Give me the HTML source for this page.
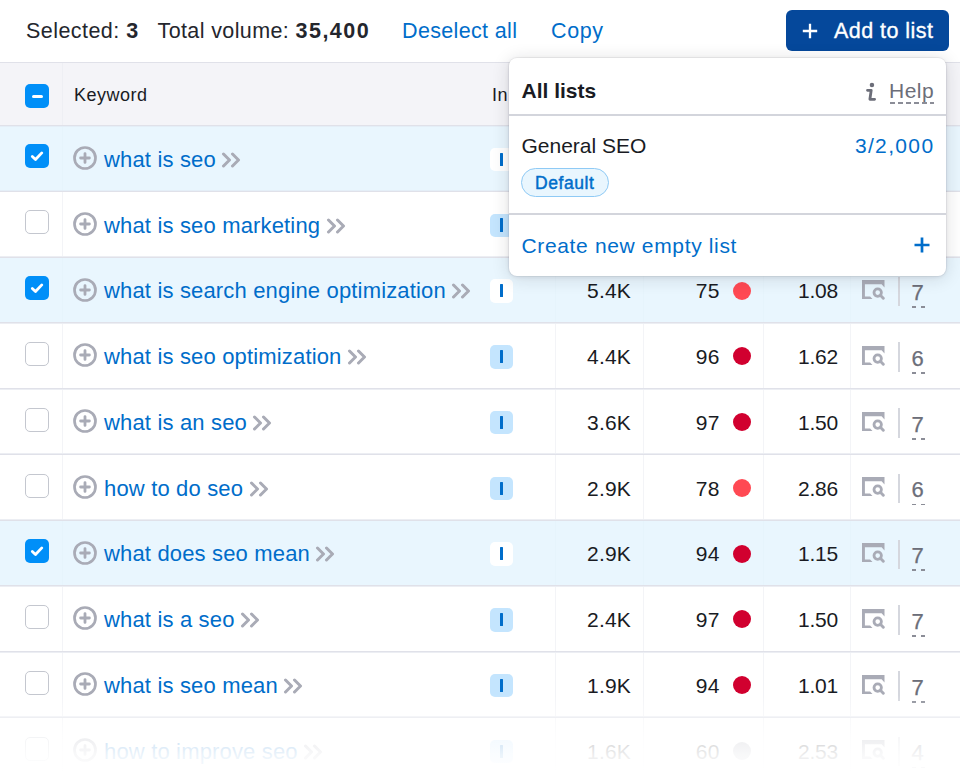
<!DOCTYPE html>
<html><head><meta charset="utf-8"><style>
html,body{margin:0;padding:0;}
body{width:960px;height:771px;overflow:hidden;position:relative;background:#fff;font-family:"Liberation Sans", sans-serif;}
.t{position:absolute;white-space:nowrap;font-family:"Liberation Sans", sans-serif;}
</style></head><body>
<div style="position:absolute;left:0px;top:0px;width:960px;height:62px;background:#fff"></div><div class="t" style="left:26px;top:20.90px;font-size:21.5px;line-height:21.5px;color:#24262d;font-weight:400;letter-spacing:0.45px;">Selected: <b style="font-weight:700">3</b></div><div class="t" style="left:157.5px;top:20.90px;font-size:21.5px;line-height:21.5px;color:#24262d;font-weight:400;letter-spacing:0.38px;">Total volume: <b style="font-weight:700;letter-spacing:1.5px">35,400</b></div><div class="t" style="left:402px;top:20.90px;font-size:21.5px;line-height:21.5px;color:#006dca;font-weight:400;letter-spacing:0.35px;">Deselect all</div><div class="t" style="left:551px;top:20.90px;font-size:21.5px;line-height:21.5px;color:#006dca;font-weight:400;letter-spacing:0.6px;">Copy</div><div style="position:absolute;left:786px;top:9.5px;width:163px;height:41.5px;background:#05489b;border-radius:6px"></div><svg style="position:absolute;left:801px;top:22px;" width="18" height="18" viewBox="0 0 18 18"><path d="M9 1.8V16.2M1.8 9H16.2" stroke="#fff" stroke-width="2.3" stroke-linecap="butt"/></svg><div class="t" style="left:834px;top:20.80px;font-size:21.5px;line-height:21.5px;color:#fff;font-weight:400;letter-spacing:0.45px;-webkit-text-stroke:0.35px #fff">Add to list</div><div style="position:absolute;left:0px;top:61.5px;width:960px;height:1.5px;background:#e0e1e9"></div><div style="position:absolute;left:0px;top:63px;width:960px;height:62.5px;background:#f4f4f8"></div><div style="position:absolute;left:61.5px;top:63px;width:1px;height:62.5px;background:#eeeff4"></div><div style="position:absolute;left:25px;top:84px;width:24px;height:24px;background:#008ff8;border-radius:5px"></div><div style="position:absolute;left:31.5px;top:94.6px;width:11px;height:3px;background:#fff;border-radius:1.5px"></div><div class="t" style="left:74px;top:86.26px;font-size:18px;line-height:18px;color:#191b23;font-weight:400;letter-spacing:0.5px;">Keyword</div><div class="t" style="left:492px;top:86.26px;font-size:18px;line-height:18px;color:#191b23;font-weight:400;letter-spacing:0.6px;">In</div><div style="position:absolute;left:0px;top:126px;width:960px;height:65px;background:#e9f6fe"></div><div style="position:absolute;left:0px;top:125px;width:960px;height:1px;background:#e0e1e9"></div><div style="position:absolute;left:0px;top:126px;width:960px;height:1px;background:#e4eef7"></div><div style="position:absolute;left:61.5px;top:126.5px;width:1px;height:63.760000000000005px;background:#e6f4fc"></div><div style="position:absolute;left:555px;top:126.5px;width:1px;height:63.760000000000005px;background:#e6f4fc"></div><div style="position:absolute;left:642.5px;top:126.5px;width:1px;height:63.760000000000005px;background:#e6f4fc"></div><div style="position:absolute;left:762.5px;top:126.5px;width:1px;height:63.760000000000005px;background:#e6f4fc"></div><div style="position:absolute;left:849.5px;top:126.5px;width:1px;height:63.760000000000005px;background:#e6f4fc"></div><div style="position:absolute;left:25px;top:144.2px;width:24px;height:24px;background:#008ff8;border-radius:5px"></div><svg style="position:absolute;left:25px;top:144.2px;" width="24" height="24" viewBox="0 0 24 24"><path d="M7.3 12.4L10.5 15.5L16.8 8.9" fill="none" stroke="#fff" stroke-width="2.8" stroke-linecap="round" stroke-linejoin="round"/></svg><svg style="position:absolute;left:73px;top:146.1px;" width="24" height="24" viewBox="0 0 24 24"><circle cx="12" cy="12" r="10.5" fill="none" stroke="#a9abb6" stroke-width="2.7"/><path d="M12 7.6V16.4M7.6 12H16.4" stroke="#a9abb6" stroke-width="2.8" stroke-linecap="round"/></svg><div class="t" style="left:104px;top:148.78px;font-size:22px;line-height:22px;color:#006dca;font-weight:400;letter-spacing:0.165px;">what is seo<svg width="20" height="17" viewBox="0 0 20 17" style="vertical-align:-2px;margin-left:5.4px"><path d="M2.5 2L8.5 8L2.5 14M11.5 2L17.5 8L11.5 14" fill="none" stroke="#a9abb6" stroke-width="3" stroke-linecap="round" stroke-linejoin="round"/></svg></div><div style="position:absolute;left:489.7px;top:147.8px;width:23.6px;height:23.6px;background:#fff;border-radius:5px"></div><div style="position:absolute;left:499.8px;top:152.7px;width:2.8px;height:13.2px;background:#006dca;border-radius:0.5px"></div><div style="position:absolute;left:0px;top:192px;width:960px;height:65px;background:#fff"></div><div style="position:absolute;left:0px;top:191px;width:960px;height:1px;background:#e0e1e9"></div><div style="position:absolute;left:0px;top:190px;width:960px;height:1px;background:#e4eef7"></div><div style="position:absolute;left:61.5px;top:192.26px;width:1px;height:63.760000000000005px;background:#f3f4f7"></div><div style="position:absolute;left:555px;top:192.26px;width:1px;height:63.760000000000005px;background:#f3f4f7"></div><div style="position:absolute;left:642.5px;top:192.26px;width:1px;height:63.760000000000005px;background:#f3f4f7"></div><div style="position:absolute;left:762.5px;top:192.26px;width:1px;height:63.760000000000005px;background:#f3f4f7"></div><div style="position:absolute;left:849.5px;top:192.26px;width:1px;height:63.760000000000005px;background:#f3f4f7"></div><div style="position:absolute;left:25.2px;top:210.45999999999998px;width:24px;height:24px;background:#fff;border:1.5px solid #c4c7cf;border-radius:5px;box-sizing:border-box"></div><svg style="position:absolute;left:73px;top:211.85999999999999px;" width="24" height="24" viewBox="0 0 24 24"><circle cx="12" cy="12" r="10.5" fill="none" stroke="#a9abb6" stroke-width="2.7"/><path d="M12 7.6V16.4M7.6 12H16.4" stroke="#a9abb6" stroke-width="2.8" stroke-linecap="round"/></svg><div class="t" style="left:104px;top:214.54px;font-size:22px;line-height:22px;color:#006dca;font-weight:400;letter-spacing:0.165px;">what is seo marketing<svg width="20" height="17" viewBox="0 0 20 17" style="vertical-align:-2px;margin-left:5.4px"><path d="M2.5 2L8.5 8L2.5 14M11.5 2L17.5 8L11.5 14" fill="none" stroke="#a9abb6" stroke-width="3" stroke-linecap="round" stroke-linejoin="round"/></svg></div><div style="position:absolute;left:489.7px;top:213.56px;width:23.6px;height:23.6px;background:#c4e5fe;border-radius:5px"></div><div style="position:absolute;left:499.8px;top:218.45999999999998px;width:2.8px;height:13.2px;background:#006dca;border-radius:0.5px"></div><div style="position:absolute;left:0px;top:258px;width:960px;height:64px;background:#e9f6fe"></div><div style="position:absolute;left:0px;top:257px;width:960px;height:1px;background:#e0e1e9"></div><div style="position:absolute;left:0px;top:256px;width:960px;height:1px;background:#eceef3"></div><div style="position:absolute;left:61.5px;top:258.02px;width:1px;height:63.760000000000005px;background:#e6f4fc"></div><div style="position:absolute;left:555px;top:258.02px;width:1px;height:63.760000000000005px;background:#e6f4fc"></div><div style="position:absolute;left:642.5px;top:258.02px;width:1px;height:63.760000000000005px;background:#e6f4fc"></div><div style="position:absolute;left:762.5px;top:258.02px;width:1px;height:63.760000000000005px;background:#e6f4fc"></div><div style="position:absolute;left:849.5px;top:258.02px;width:1px;height:63.760000000000005px;background:#e6f4fc"></div><div style="position:absolute;left:25px;top:275.71999999999997px;width:24px;height:24px;background:#008ff8;border-radius:5px"></div><svg style="position:absolute;left:25px;top:275.71999999999997px;" width="24" height="24" viewBox="0 0 24 24"><path d="M7.3 12.4L10.5 15.5L16.8 8.9" fill="none" stroke="#fff" stroke-width="2.8" stroke-linecap="round" stroke-linejoin="round"/></svg><svg style="position:absolute;left:73px;top:277.62px;" width="24" height="24" viewBox="0 0 24 24"><circle cx="12" cy="12" r="10.5" fill="none" stroke="#a9abb6" stroke-width="2.7"/><path d="M12 7.6V16.4M7.6 12H16.4" stroke="#a9abb6" stroke-width="2.8" stroke-linecap="round"/></svg><div class="t" style="left:104px;top:280.30px;font-size:22px;line-height:22px;color:#006dca;font-weight:400;letter-spacing:0.165px;">what is search engine optimization<svg width="20" height="17" viewBox="0 0 20 17" style="vertical-align:-2px;margin-left:5.4px"><path d="M2.5 2L8.5 8L2.5 14M11.5 2L17.5 8L11.5 14" fill="none" stroke="#a9abb6" stroke-width="3" stroke-linecap="round" stroke-linejoin="round"/></svg></div><div style="position:absolute;left:489.7px;top:279.32px;width:23.6px;height:23.6px;background:#fff;border-radius:5px"></div><div style="position:absolute;left:499.8px;top:284.21999999999997px;width:2.8px;height:13.2px;background:#006dca;border-radius:0.5px"></div><div class="t" style="right:329px;text-align:right;top:280.44px;font-size:21px;line-height:21px;color:#191b23;font-weight:400;letter-spacing:0.2px;">5.4K</div><div class="t" style="right:240px;text-align:right;top:280.44px;font-size:21px;line-height:21px;color:#191b23;font-weight:400;letter-spacing:0.5px;">75</div><div style="position:absolute;left:732.9px;top:281.52px;width:18px;height:18px;background:#ff4953;border-radius:50%"></div><div class="t" style="right:122px;text-align:right;top:280.44px;font-size:21px;line-height:21px;color:#191b23;font-weight:400;letter-spacing:-0.2px;">1.08</div><svg style="position:absolute;left:862.2px;top:280.02px;" width="23" height="20" viewBox="0 0 23 20"><path d="M0 0H22.5V7.5L19.6 4.3H2.9V16.4H8.1L10.5 19.1H0Z" fill="#a9abb6"/><circle cx="15.7" cy="12.6" r="3.7" fill="none" stroke="#a9abb6" stroke-width="2.8"/><path d="M18.6 15.5L21.3 18.2" stroke="#a9abb6" stroke-width="2.9" stroke-linecap="round"/></svg><div style="position:absolute;left:898.2px;top:276.52px;width:1.5px;height:29.5px;background:#d5d7de"></div><div class="t" style="left:911.5px;top:282.00px;font-size:22px;line-height:22px;color:#6c6e79;font-weight:400;letter-spacing:0px;-webkit-text-stroke:0.25px #6c6e79">7</div><div style="position:absolute;left:911.5px;top:306.21999999999997px;width:13.5px;height:1.8px;background:repeating-linear-gradient(90deg,#8b8d97 0 4.5px,transparent 4.5px 9px)"></div><div style="position:absolute;left:0px;top:323px;width:960px;height:65px;background:#fff"></div><div style="position:absolute;left:0px;top:322px;width:960px;height:1px;background:#e0e1e9"></div><div style="position:absolute;left:0px;top:323px;width:960px;height:1px;background:#eceef3"></div><div style="position:absolute;left:61.5px;top:323.78000000000003px;width:1px;height:63.760000000000005px;background:#f3f4f7"></div><div style="position:absolute;left:555px;top:323.78000000000003px;width:1px;height:63.760000000000005px;background:#f3f4f7"></div><div style="position:absolute;left:642.5px;top:323.78000000000003px;width:1px;height:63.760000000000005px;background:#f3f4f7"></div><div style="position:absolute;left:762.5px;top:323.78000000000003px;width:1px;height:63.760000000000005px;background:#f3f4f7"></div><div style="position:absolute;left:849.5px;top:323.78000000000003px;width:1px;height:63.760000000000005px;background:#f3f4f7"></div><div style="position:absolute;left:25.2px;top:341.98px;width:24px;height:24px;background:#fff;border:1.5px solid #c4c7cf;border-radius:5px;box-sizing:border-box"></div><svg style="position:absolute;left:73px;top:343.38000000000005px;" width="24" height="24" viewBox="0 0 24 24"><circle cx="12" cy="12" r="10.5" fill="none" stroke="#a9abb6" stroke-width="2.7"/><path d="M12 7.6V16.4M7.6 12H16.4" stroke="#a9abb6" stroke-width="2.8" stroke-linecap="round"/></svg><div class="t" style="left:104px;top:346.06px;font-size:22px;line-height:22px;color:#006dca;font-weight:400;letter-spacing:0.165px;">what is seo optimization<svg width="20" height="17" viewBox="0 0 20 17" style="vertical-align:-2px;margin-left:5.4px"><path d="M2.5 2L8.5 8L2.5 14M11.5 2L17.5 8L11.5 14" fill="none" stroke="#a9abb6" stroke-width="3" stroke-linecap="round" stroke-linejoin="round"/></svg></div><div style="position:absolute;left:489.7px;top:345.08000000000004px;width:23.6px;height:23.6px;background:#c4e5fe;border-radius:5px"></div><div style="position:absolute;left:499.8px;top:349.98px;width:2.8px;height:13.2px;background:#006dca;border-radius:0.5px"></div><div class="t" style="right:329px;text-align:right;top:346.20px;font-size:21px;line-height:21px;color:#191b23;font-weight:400;letter-spacing:0.2px;">4.4K</div><div class="t" style="right:240px;text-align:right;top:346.20px;font-size:21px;line-height:21px;color:#191b23;font-weight:400;letter-spacing:0.5px;">96</div><div style="position:absolute;left:732.9px;top:347.28000000000003px;width:18px;height:18px;background:#d1002f;border-radius:50%"></div><div class="t" style="right:122px;text-align:right;top:346.20px;font-size:21px;line-height:21px;color:#191b23;font-weight:400;letter-spacing:-0.2px;">1.62</div><svg style="position:absolute;left:862.2px;top:345.78000000000003px;" width="23" height="20" viewBox="0 0 23 20"><path d="M0 0H22.5V7.5L19.6 4.3H2.9V16.4H8.1L10.5 19.1H0Z" fill="#a9abb6"/><circle cx="15.7" cy="12.6" r="3.7" fill="none" stroke="#a9abb6" stroke-width="2.8"/><path d="M18.6 15.5L21.3 18.2" stroke="#a9abb6" stroke-width="2.9" stroke-linecap="round"/></svg><div style="position:absolute;left:898.2px;top:342.28000000000003px;width:1.5px;height:29.5px;background:#d5d7de"></div><div class="t" style="left:911.5px;top:347.76px;font-size:22px;line-height:22px;color:#6c6e79;font-weight:400;letter-spacing:0px;-webkit-text-stroke:0.25px #6c6e79">6</div><div style="position:absolute;left:911.5px;top:371.98px;width:13.5px;height:1.8px;background:repeating-linear-gradient(90deg,#8b8d97 0 4.5px,transparent 4.5px 9px)"></div><div style="position:absolute;left:0px;top:389px;width:960px;height:65px;background:#fff"></div><div style="position:absolute;left:0px;top:388px;width:960px;height:1px;background:#e0e1e9"></div><div style="position:absolute;left:0px;top:389px;width:960px;height:1px;background:#eceef3"></div><div style="position:absolute;left:61.5px;top:389.54px;width:1px;height:63.760000000000005px;background:#f3f4f7"></div><div style="position:absolute;left:555px;top:389.54px;width:1px;height:63.760000000000005px;background:#f3f4f7"></div><div style="position:absolute;left:642.5px;top:389.54px;width:1px;height:63.760000000000005px;background:#f3f4f7"></div><div style="position:absolute;left:762.5px;top:389.54px;width:1px;height:63.760000000000005px;background:#f3f4f7"></div><div style="position:absolute;left:849.5px;top:389.54px;width:1px;height:63.760000000000005px;background:#f3f4f7"></div><div style="position:absolute;left:25.2px;top:407.74px;width:24px;height:24px;background:#fff;border:1.5px solid #c4c7cf;border-radius:5px;box-sizing:border-box"></div><svg style="position:absolute;left:73px;top:409.14000000000004px;" width="24" height="24" viewBox="0 0 24 24"><circle cx="12" cy="12" r="10.5" fill="none" stroke="#a9abb6" stroke-width="2.7"/><path d="M12 7.6V16.4M7.6 12H16.4" stroke="#a9abb6" stroke-width="2.8" stroke-linecap="round"/></svg><div class="t" style="left:104px;top:411.82px;font-size:22px;line-height:22px;color:#006dca;font-weight:400;letter-spacing:0.165px;">what is an seo<svg width="20" height="17" viewBox="0 0 20 17" style="vertical-align:-2px;margin-left:5.4px"><path d="M2.5 2L8.5 8L2.5 14M11.5 2L17.5 8L11.5 14" fill="none" stroke="#a9abb6" stroke-width="3" stroke-linecap="round" stroke-linejoin="round"/></svg></div><div style="position:absolute;left:489.7px;top:410.84000000000003px;width:23.6px;height:23.6px;background:#c4e5fe;border-radius:5px"></div><div style="position:absolute;left:499.8px;top:415.74px;width:2.8px;height:13.2px;background:#006dca;border-radius:0.5px"></div><div class="t" style="right:329px;text-align:right;top:411.96px;font-size:21px;line-height:21px;color:#191b23;font-weight:400;letter-spacing:0.2px;">3.6K</div><div class="t" style="right:240px;text-align:right;top:411.96px;font-size:21px;line-height:21px;color:#191b23;font-weight:400;letter-spacing:0.5px;">97</div><div style="position:absolute;left:732.9px;top:413.04px;width:18px;height:18px;background:#d1002f;border-radius:50%"></div><div class="t" style="right:122px;text-align:right;top:411.96px;font-size:21px;line-height:21px;color:#191b23;font-weight:400;letter-spacing:-0.2px;">1.50</div><svg style="position:absolute;left:862.2px;top:411.54px;" width="23" height="20" viewBox="0 0 23 20"><path d="M0 0H22.5V7.5L19.6 4.3H2.9V16.4H8.1L10.5 19.1H0Z" fill="#a9abb6"/><circle cx="15.7" cy="12.6" r="3.7" fill="none" stroke="#a9abb6" stroke-width="2.8"/><path d="M18.6 15.5L21.3 18.2" stroke="#a9abb6" stroke-width="2.9" stroke-linecap="round"/></svg><div style="position:absolute;left:898.2px;top:408.04px;width:1.5px;height:29.5px;background:#d5d7de"></div><div class="t" style="left:911.5px;top:413.52px;font-size:22px;line-height:22px;color:#6c6e79;font-weight:400;letter-spacing:0px;-webkit-text-stroke:0.25px #6c6e79">7</div><div style="position:absolute;left:911.5px;top:437.74px;width:13.5px;height:1.8px;background:repeating-linear-gradient(90deg,#8b8d97 0 4.5px,transparent 4.5px 9px)"></div><div style="position:absolute;left:0px;top:455px;width:960px;height:65px;background:#fff"></div><div style="position:absolute;left:0px;top:454px;width:960px;height:1px;background:#e0e1e9"></div><div style="position:absolute;left:0px;top:453px;width:960px;height:1px;background:#eceef3"></div><div style="position:absolute;left:61.5px;top:455.3px;width:1px;height:63.760000000000005px;background:#f3f4f7"></div><div style="position:absolute;left:555px;top:455.3px;width:1px;height:63.760000000000005px;background:#f3f4f7"></div><div style="position:absolute;left:642.5px;top:455.3px;width:1px;height:63.760000000000005px;background:#f3f4f7"></div><div style="position:absolute;left:762.5px;top:455.3px;width:1px;height:63.760000000000005px;background:#f3f4f7"></div><div style="position:absolute;left:849.5px;top:455.3px;width:1px;height:63.760000000000005px;background:#f3f4f7"></div><div style="position:absolute;left:25.2px;top:473.5px;width:24px;height:24px;background:#fff;border:1.5px solid #c4c7cf;border-radius:5px;box-sizing:border-box"></div><svg style="position:absolute;left:73px;top:474.90000000000003px;" width="24" height="24" viewBox="0 0 24 24"><circle cx="12" cy="12" r="10.5" fill="none" stroke="#a9abb6" stroke-width="2.7"/><path d="M12 7.6V16.4M7.6 12H16.4" stroke="#a9abb6" stroke-width="2.8" stroke-linecap="round"/></svg><div class="t" style="left:104px;top:477.58px;font-size:22px;line-height:22px;color:#006dca;font-weight:400;letter-spacing:0.165px;">how to do seo<svg width="20" height="17" viewBox="0 0 20 17" style="vertical-align:-2px;margin-left:5.4px"><path d="M2.5 2L8.5 8L2.5 14M11.5 2L17.5 8L11.5 14" fill="none" stroke="#a9abb6" stroke-width="3" stroke-linecap="round" stroke-linejoin="round"/></svg></div><div style="position:absolute;left:489.7px;top:476.6px;width:23.6px;height:23.6px;background:#c4e5fe;border-radius:5px"></div><div style="position:absolute;left:499.8px;top:481.5px;width:2.8px;height:13.2px;background:#006dca;border-radius:0.5px"></div><div class="t" style="right:329px;text-align:right;top:477.72px;font-size:21px;line-height:21px;color:#191b23;font-weight:400;letter-spacing:0.2px;">2.9K</div><div class="t" style="right:240px;text-align:right;top:477.72px;font-size:21px;line-height:21px;color:#191b23;font-weight:400;letter-spacing:0.5px;">78</div><div style="position:absolute;left:732.9px;top:478.8px;width:18px;height:18px;background:#ff4953;border-radius:50%"></div><div class="t" style="right:122px;text-align:right;top:477.72px;font-size:21px;line-height:21px;color:#191b23;font-weight:400;letter-spacing:-0.2px;">2.86</div><svg style="position:absolute;left:862.2px;top:477.3px;" width="23" height="20" viewBox="0 0 23 20"><path d="M0 0H22.5V7.5L19.6 4.3H2.9V16.4H8.1L10.5 19.1H0Z" fill="#a9abb6"/><circle cx="15.7" cy="12.6" r="3.7" fill="none" stroke="#a9abb6" stroke-width="2.8"/><path d="M18.6 15.5L21.3 18.2" stroke="#a9abb6" stroke-width="2.9" stroke-linecap="round"/></svg><div style="position:absolute;left:898.2px;top:473.8px;width:1.5px;height:29.5px;background:#d5d7de"></div><div class="t" style="left:911.5px;top:479.28px;font-size:22px;line-height:22px;color:#6c6e79;font-weight:400;letter-spacing:0px;-webkit-text-stroke:0.25px #6c6e79">6</div><div style="position:absolute;left:911.5px;top:503.5px;width:13.5px;height:1.8px;background:repeating-linear-gradient(90deg,#8b8d97 0 4.5px,transparent 4.5px 9px)"></div><div style="position:absolute;left:0px;top:521px;width:960px;height:64px;background:#e9f6fe"></div><div style="position:absolute;left:0px;top:520px;width:960px;height:1px;background:#e0e1e9"></div><div style="position:absolute;left:0px;top:519px;width:960px;height:1px;background:#eceef3"></div><div style="position:absolute;left:61.5px;top:521.0600000000001px;width:1px;height:63.760000000000005px;background:#e6f4fc"></div><div style="position:absolute;left:555px;top:521.0600000000001px;width:1px;height:63.760000000000005px;background:#e6f4fc"></div><div style="position:absolute;left:642.5px;top:521.0600000000001px;width:1px;height:63.760000000000005px;background:#e6f4fc"></div><div style="position:absolute;left:762.5px;top:521.0600000000001px;width:1px;height:63.760000000000005px;background:#e6f4fc"></div><div style="position:absolute;left:849.5px;top:521.0600000000001px;width:1px;height:63.760000000000005px;background:#e6f4fc"></div><div style="position:absolute;left:25px;top:538.7600000000001px;width:24px;height:24px;background:#008ff8;border-radius:5px"></div><svg style="position:absolute;left:25px;top:538.7600000000001px;" width="24" height="24" viewBox="0 0 24 24"><path d="M7.3 12.4L10.5 15.5L16.8 8.9" fill="none" stroke="#fff" stroke-width="2.8" stroke-linecap="round" stroke-linejoin="round"/></svg><svg style="position:absolute;left:73px;top:540.6600000000001px;" width="24" height="24" viewBox="0 0 24 24"><circle cx="12" cy="12" r="10.5" fill="none" stroke="#a9abb6" stroke-width="2.7"/><path d="M12 7.6V16.4M7.6 12H16.4" stroke="#a9abb6" stroke-width="2.8" stroke-linecap="round"/></svg><div class="t" style="left:104px;top:543.34px;font-size:22px;line-height:22px;color:#006dca;font-weight:400;letter-spacing:0.165px;">what does seo mean<svg width="20" height="17" viewBox="0 0 20 17" style="vertical-align:-2px;margin-left:5.4px"><path d="M2.5 2L8.5 8L2.5 14M11.5 2L17.5 8L11.5 14" fill="none" stroke="#a9abb6" stroke-width="3" stroke-linecap="round" stroke-linejoin="round"/></svg></div><div style="position:absolute;left:489.7px;top:542.36px;width:23.6px;height:23.6px;background:#fff;border-radius:5px"></div><div style="position:absolute;left:499.8px;top:547.2600000000001px;width:2.8px;height:13.2px;background:#006dca;border-radius:0.5px"></div><div class="t" style="right:329px;text-align:right;top:543.48px;font-size:21px;line-height:21px;color:#191b23;font-weight:400;letter-spacing:0.2px;">2.9K</div><div class="t" style="right:240px;text-align:right;top:543.48px;font-size:21px;line-height:21px;color:#191b23;font-weight:400;letter-spacing:0.5px;">94</div><div style="position:absolute;left:732.9px;top:544.5600000000001px;width:18px;height:18px;background:#d1002f;border-radius:50%"></div><div class="t" style="right:122px;text-align:right;top:543.48px;font-size:21px;line-height:21px;color:#191b23;font-weight:400;letter-spacing:-0.2px;">1.15</div><svg style="position:absolute;left:862.2px;top:543.0600000000001px;" width="23" height="20" viewBox="0 0 23 20"><path d="M0 0H22.5V7.5L19.6 4.3H2.9V16.4H8.1L10.5 19.1H0Z" fill="#a9abb6"/><circle cx="15.7" cy="12.6" r="3.7" fill="none" stroke="#a9abb6" stroke-width="2.8"/><path d="M18.6 15.5L21.3 18.2" stroke="#a9abb6" stroke-width="2.9" stroke-linecap="round"/></svg><div style="position:absolute;left:898.2px;top:539.5600000000001px;width:1.5px;height:29.5px;background:#d5d7de"></div><div class="t" style="left:911.5px;top:545.04px;font-size:22px;line-height:22px;color:#6c6e79;font-weight:400;letter-spacing:0px;-webkit-text-stroke:0.25px #6c6e79">7</div><div style="position:absolute;left:911.5px;top:569.2600000000001px;width:13.5px;height:1.8px;background:repeating-linear-gradient(90deg,#8b8d97 0 4.5px,transparent 4.5px 9px)"></div><div style="position:absolute;left:0px;top:586px;width:960px;height:65px;background:#fff"></div><div style="position:absolute;left:0px;top:585px;width:960px;height:1px;background:#e0e1e9"></div><div style="position:absolute;left:0px;top:586px;width:960px;height:1px;background:#eceef3"></div><div style="position:absolute;left:61.5px;top:586.82px;width:1px;height:63.760000000000005px;background:#f3f4f7"></div><div style="position:absolute;left:555px;top:586.82px;width:1px;height:63.760000000000005px;background:#f3f4f7"></div><div style="position:absolute;left:642.5px;top:586.82px;width:1px;height:63.760000000000005px;background:#f3f4f7"></div><div style="position:absolute;left:762.5px;top:586.82px;width:1px;height:63.760000000000005px;background:#f3f4f7"></div><div style="position:absolute;left:849.5px;top:586.82px;width:1px;height:63.760000000000005px;background:#f3f4f7"></div><div style="position:absolute;left:25.2px;top:605.0200000000001px;width:24px;height:24px;background:#fff;border:1.5px solid #c4c7cf;border-radius:5px;box-sizing:border-box"></div><svg style="position:absolute;left:73px;top:606.4200000000001px;" width="24" height="24" viewBox="0 0 24 24"><circle cx="12" cy="12" r="10.5" fill="none" stroke="#a9abb6" stroke-width="2.7"/><path d="M12 7.6V16.4M7.6 12H16.4" stroke="#a9abb6" stroke-width="2.8" stroke-linecap="round"/></svg><div class="t" style="left:104px;top:609.10px;font-size:22px;line-height:22px;color:#006dca;font-weight:400;letter-spacing:0.165px;">what is a seo<svg width="20" height="17" viewBox="0 0 20 17" style="vertical-align:-2px;margin-left:5.4px"><path d="M2.5 2L8.5 8L2.5 14M11.5 2L17.5 8L11.5 14" fill="none" stroke="#a9abb6" stroke-width="3" stroke-linecap="round" stroke-linejoin="round"/></svg></div><div style="position:absolute;left:489.7px;top:608.12px;width:23.6px;height:23.6px;background:#c4e5fe;border-radius:5px"></div><div style="position:absolute;left:499.8px;top:613.0200000000001px;width:2.8px;height:13.2px;background:#006dca;border-radius:0.5px"></div><div class="t" style="right:329px;text-align:right;top:609.24px;font-size:21px;line-height:21px;color:#191b23;font-weight:400;letter-spacing:0.2px;">2.4K</div><div class="t" style="right:240px;text-align:right;top:609.24px;font-size:21px;line-height:21px;color:#191b23;font-weight:400;letter-spacing:0.5px;">97</div><div style="position:absolute;left:732.9px;top:610.32px;width:18px;height:18px;background:#d1002f;border-radius:50%"></div><div class="t" style="right:122px;text-align:right;top:609.24px;font-size:21px;line-height:21px;color:#191b23;font-weight:400;letter-spacing:-0.2px;">1.50</div><svg style="position:absolute;left:862.2px;top:608.82px;" width="23" height="20" viewBox="0 0 23 20"><path d="M0 0H22.5V7.5L19.6 4.3H2.9V16.4H8.1L10.5 19.1H0Z" fill="#a9abb6"/><circle cx="15.7" cy="12.6" r="3.7" fill="none" stroke="#a9abb6" stroke-width="2.8"/><path d="M18.6 15.5L21.3 18.2" stroke="#a9abb6" stroke-width="2.9" stroke-linecap="round"/></svg><div style="position:absolute;left:898.2px;top:605.32px;width:1.5px;height:29.5px;background:#d5d7de"></div><div class="t" style="left:911.5px;top:610.80px;font-size:22px;line-height:22px;color:#6c6e79;font-weight:400;letter-spacing:0px;-webkit-text-stroke:0.25px #6c6e79">7</div><div style="position:absolute;left:911.5px;top:635.0200000000001px;width:13.5px;height:1.8px;background:repeating-linear-gradient(90deg,#8b8d97 0 4.5px,transparent 4.5px 9px)"></div><div style="position:absolute;left:0px;top:652px;width:960px;height:65px;background:#fff"></div><div style="position:absolute;left:0px;top:651px;width:960px;height:1px;background:#e0e1e9"></div><div style="position:absolute;left:0px;top:652px;width:960px;height:1px;background:#eceef3"></div><div style="position:absolute;left:61.5px;top:652.58px;width:1px;height:63.760000000000005px;background:#f3f4f7"></div><div style="position:absolute;left:555px;top:652.58px;width:1px;height:63.760000000000005px;background:#f3f4f7"></div><div style="position:absolute;left:642.5px;top:652.58px;width:1px;height:63.760000000000005px;background:#f3f4f7"></div><div style="position:absolute;left:762.5px;top:652.58px;width:1px;height:63.760000000000005px;background:#f3f4f7"></div><div style="position:absolute;left:849.5px;top:652.58px;width:1px;height:63.760000000000005px;background:#f3f4f7"></div><div style="position:absolute;left:25.2px;top:670.7800000000001px;width:24px;height:24px;background:#fff;border:1.5px solid #c4c7cf;border-radius:5px;box-sizing:border-box"></div><svg style="position:absolute;left:73px;top:672.1800000000001px;" width="24" height="24" viewBox="0 0 24 24"><circle cx="12" cy="12" r="10.5" fill="none" stroke="#a9abb6" stroke-width="2.7"/><path d="M12 7.6V16.4M7.6 12H16.4" stroke="#a9abb6" stroke-width="2.8" stroke-linecap="round"/></svg><div class="t" style="left:104px;top:674.86px;font-size:22px;line-height:22px;color:#006dca;font-weight:400;letter-spacing:0.165px;">what is seo mean<svg width="20" height="17" viewBox="0 0 20 17" style="vertical-align:-2px;margin-left:5.4px"><path d="M2.5 2L8.5 8L2.5 14M11.5 2L17.5 8L11.5 14" fill="none" stroke="#a9abb6" stroke-width="3" stroke-linecap="round" stroke-linejoin="round"/></svg></div><div style="position:absolute;left:489.7px;top:673.88px;width:23.6px;height:23.6px;background:#c4e5fe;border-radius:5px"></div><div style="position:absolute;left:499.8px;top:678.7800000000001px;width:2.8px;height:13.2px;background:#006dca;border-radius:0.5px"></div><div class="t" style="right:329px;text-align:right;top:675.00px;font-size:21px;line-height:21px;color:#191b23;font-weight:400;letter-spacing:0.2px;">1.9K</div><div class="t" style="right:240px;text-align:right;top:675.00px;font-size:21px;line-height:21px;color:#191b23;font-weight:400;letter-spacing:0.5px;">94</div><div style="position:absolute;left:732.9px;top:676.08px;width:18px;height:18px;background:#d1002f;border-radius:50%"></div><div class="t" style="right:122px;text-align:right;top:675.00px;font-size:21px;line-height:21px;color:#191b23;font-weight:400;letter-spacing:-0.2px;">1.01</div><svg style="position:absolute;left:862.2px;top:674.58px;" width="23" height="20" viewBox="0 0 23 20"><path d="M0 0H22.5V7.5L19.6 4.3H2.9V16.4H8.1L10.5 19.1H0Z" fill="#a9abb6"/><circle cx="15.7" cy="12.6" r="3.7" fill="none" stroke="#a9abb6" stroke-width="2.8"/><path d="M18.6 15.5L21.3 18.2" stroke="#a9abb6" stroke-width="2.9" stroke-linecap="round"/></svg><div style="position:absolute;left:898.2px;top:671.08px;width:1.5px;height:29.5px;background:#d5d7de"></div><div class="t" style="left:911.5px;top:676.56px;font-size:22px;line-height:22px;color:#6c6e79;font-weight:400;letter-spacing:0px;-webkit-text-stroke:0.25px #6c6e79">7</div><div style="position:absolute;left:911.5px;top:700.7800000000001px;width:13.5px;height:1.8px;background:repeating-linear-gradient(90deg,#8b8d97 0 4.5px,transparent 4.5px 9px)"></div><div style="position:absolute;left:0px;top:718px;width:960px;height:65px;background:#fff"></div><div style="position:absolute;left:0px;top:717px;width:960px;height:1px;background:#e0e1e9"></div><div style="position:absolute;left:0px;top:716px;width:960px;height:1px;background:#eceef3"></div><div style="position:absolute;left:61.5px;top:718.34px;width:1px;height:63.760000000000005px;background:#f3f4f7"></div><div style="position:absolute;left:555px;top:718.34px;width:1px;height:63.760000000000005px;background:#f3f4f7"></div><div style="position:absolute;left:642.5px;top:718.34px;width:1px;height:63.760000000000005px;background:#f3f4f7"></div><div style="position:absolute;left:762.5px;top:718.34px;width:1px;height:63.760000000000005px;background:#f3f4f7"></div><div style="position:absolute;left:849.5px;top:718.34px;width:1px;height:63.760000000000005px;background:#f3f4f7"></div><div style="position:absolute;left:25.2px;top:736.5400000000001px;width:24px;height:24px;background:#fff;border:1.5px solid #c4c7cf;border-radius:5px;box-sizing:border-box"></div><svg style="position:absolute;left:73px;top:737.94px;" width="24" height="24" viewBox="0 0 24 24"><circle cx="12" cy="12" r="10.5" fill="none" stroke="#a9abb6" stroke-width="2.7"/><path d="M12 7.6V16.4M7.6 12H16.4" stroke="#a9abb6" stroke-width="2.8" stroke-linecap="round"/></svg><div class="t" style="left:104px;top:740.62px;font-size:22px;line-height:22px;color:#006dca;font-weight:400;letter-spacing:0.165px;">how to improve seo<svg width="20" height="17" viewBox="0 0 20 17" style="vertical-align:-2px;margin-left:5.4px"><path d="M2.5 2L8.5 8L2.5 14M11.5 2L17.5 8L11.5 14" fill="none" stroke="#a9abb6" stroke-width="3" stroke-linecap="round" stroke-linejoin="round"/></svg></div><div style="position:absolute;left:489.7px;top:739.64px;width:23.6px;height:23.6px;background:#c4e5fe;border-radius:5px"></div><div style="position:absolute;left:499.8px;top:744.5400000000001px;width:2.8px;height:13.2px;background:#006dca;border-radius:0.5px"></div><div class="t" style="right:329px;text-align:right;top:740.76px;font-size:21px;line-height:21px;color:#191b23;font-weight:400;letter-spacing:0.2px;">1.6K</div><div class="t" style="right:240px;text-align:right;top:740.76px;font-size:21px;line-height:21px;color:#191b23;font-weight:400;letter-spacing:0.5px;">60</div><div style="position:absolute;left:732.9px;top:741.84px;width:18px;height:18px;background:#a9abb6;border-radius:50%"></div><div class="t" style="right:122px;text-align:right;top:740.76px;font-size:21px;line-height:21px;color:#191b23;font-weight:400;letter-spacing:-0.2px;">2.53</div><svg style="position:absolute;left:862.2px;top:740.34px;" width="23" height="20" viewBox="0 0 23 20"><path d="M0 0H22.5V7.5L19.6 4.3H2.9V16.4H8.1L10.5 19.1H0Z" fill="#a9abb6"/><circle cx="15.7" cy="12.6" r="3.7" fill="none" stroke="#a9abb6" stroke-width="2.8"/><path d="M18.6 15.5L21.3 18.2" stroke="#a9abb6" stroke-width="2.9" stroke-linecap="round"/></svg><div style="position:absolute;left:898.2px;top:736.84px;width:1.5px;height:29.5px;background:#d5d7de"></div><div class="t" style="left:911.5px;top:742.32px;font-size:22px;line-height:22px;color:#6c6e79;font-weight:400;letter-spacing:0px;-webkit-text-stroke:0.25px #6c6e79">4</div><div style="position:absolute;left:911.5px;top:766.5400000000001px;width:13.5px;height:1.8px;background:repeating-linear-gradient(90deg,#8b8d97 0 4.5px,transparent 4.5px 9px)"></div><div style="position:absolute;left:0px;top:695px;width:960px;height:76px;background:linear-gradient(180deg,rgba(255,255,255,0) 0px,rgba(255,255,255,0.45) 22px,rgba(255,255,255,0.8) 42px,rgba(255,255,255,0.92) 60px,rgba(255,255,255,0.97) 76px)"></div><div style="position:absolute;left:508.7px;top:58.3px;width:437.3px;height:217.6px;background:#fff;border-radius:8px;box-shadow:0 0 0 1px rgba(25,27,35,0.05),0 1px 4px rgba(25,27,35,0.08),0 2px 18px rgba(25,27,35,0.14)"></div><div class="t" style="left:521.5px;top:80.22px;font-size:21px;line-height:21px;color:#191b23;font-weight:700;letter-spacing:0px;">All lists</div><svg style="position:absolute;left:862px;top:78px;" width="20" height="26" viewBox="0 0 20 26"><circle cx="9.95" cy="7.1" r="2.25" fill="#6c6e79"/><path d="M5.5 12.3H9.2L7.9 21.3H12.6" fill="none" stroke="#6c6e79" stroke-width="2.8" stroke-linecap="round" stroke-linejoin="round"/></svg><div class="t" style="left:889px;top:79.72px;font-size:21px;line-height:21px;color:#6c6e79;font-weight:400;letter-spacing:0.5px;">Help</div><div style="position:absolute;left:890px;top:102.2px;width:43.5px;height:1.6px;background:repeating-linear-gradient(90deg,#8b8d97 0 5px,transparent 5px 8px)"></div><div style="position:absolute;left:508.7px;top:114px;width:437.3px;height:2px;background:#d3d5dc"></div><div class="t" style="left:521.5px;top:135.42px;font-size:21px;line-height:21px;color:#191b23;font-weight:400;letter-spacing:0px;">General SEO</div><div class="t" style="right:25.600000000000023px;text-align:right;top:135.42px;font-size:21px;line-height:21px;color:#006dca;font-weight:400;letter-spacing:1.35px;">3/2,000</div><div style="position:absolute;left:520.7px;top:168.1px;width:88.2px;height:29.3px;background:#e9f6fe;border:1.5px solid #8fcaf5;border-radius:15px;box-sizing:border-box"></div><div class="t" style="left:535px;top:175.19px;font-size:17.5px;line-height:17.5px;color:#006dca;font-weight:400;letter-spacing:0.55px;-webkit-text-stroke:0.45px #006dca">Default</div><div style="position:absolute;left:508.7px;top:213px;width:437.3px;height:2px;background:#d3d5dc"></div><div class="t" style="left:521.5px;top:235.02px;font-size:21px;line-height:21px;color:#006dca;font-weight:400;letter-spacing:0.65px;">Create new empty list</div><svg style="position:absolute;left:913.2px;top:235.5px;" width="18" height="18" viewBox="0 0 18 18"><path d="M9 1.5V16.5M1.5 9H16.5" stroke="#006dca" stroke-width="2.7"/></svg>
</body></html>
